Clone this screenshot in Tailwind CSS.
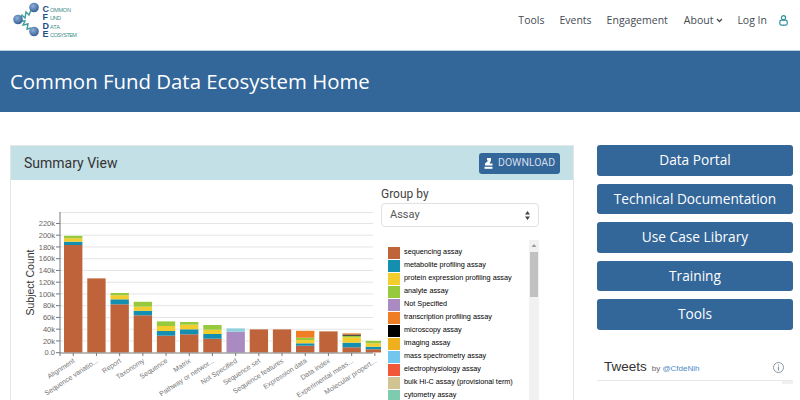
<!DOCTYPE html>
<html lang="en">
<head>
<meta charset="utf-8">
<title>Common Fund Data Ecosystem Home</title>
<script src="https://cdn.jsdelivr.net/npm/@tailwindcss/browser@4"></script>
</head>
<body class="bg-white font-['Open_Sans',sans-serif] overflow-hidden">
<div class="h-[400px] overflow-hidden">
    <!-- Navbar -->
    <nav class="h-[50px] flex items-start justify-between pl-[12px] pr-[12px]">
        <svg class="w-[70px] h-[42px]" viewBox="12 0 70 42">
            <defs>
                <radialGradient id="ball" cx="40%" cy="35%" r="70%">
                    <stop offset="0%" stop-color="#8fb0d8"/>
                    <stop offset="100%" stop-color="#2f5b93"/>
                </radialGradient>
            </defs>
            <path d="M31 10 L29 15 L26 12 L25 18 L22 15 L21 19 M21 21 L25 21 L23 25 L28 24 L27 29 L31 28" fill="none" stroke="#3f9c97" stroke-width="1.4"/>
            <circle cx="34" cy="7.5" r="4.8" fill="url(#ball)"/>
            <circle cx="18" cy="19.5" r="4.8" fill="url(#ball)"/>
            <circle cx="34" cy="31.5" r="4.8" fill="url(#ball)"/>
            <g font-family="Liberation Sans" font-weight="700" font-size="9" fill="#1f4f86">
                <text x="42.5" y="11.5">C</text>
                <text x="42.5" y="20">F</text>
                <text x="42.5" y="28.5">D</text>
                <text x="42.5" y="37">E</text>
            </g>
            <g font-family="Liberation Sans" font-size="5.6" fill="#3f8f8c">
                <text x="50" y="11.5" textLength="21">OMMON</text>
                <text x="50" y="20" textLength="11">UND</text>
                <text x="50" y="28.5" textLength="10">ATA</text>
                <text x="50" y="37" textLength="27">COSYSTEM</text>
            </g>
        </svg>
        <div class="flex items-center mt-[13px] leading-[14px] text-[10.5px] text-[#444b55]">
            <a class="mr-[15px]">Tools</a>
            <a class="mr-[15px]">Events</a>
            <a class="mr-[16px]">Engagement</a>
            <a class="mr-[14px] flex items-center">About
                <svg class="w-[7px] h-[5px] ml-[3px]" viewBox="0 0 7 5"><path d="M1 1 L3.5 3.5 L6 1" fill="none" stroke="#444b55" stroke-width="1.3"/></svg>
            </a>
            <a class="mr-[12px]">Log In</a>
            <svg class="w-[9px] h-[11px]" viewBox="0 0 9 11" fill="none" stroke="#2f8f9c" stroke-width="1.2">
                <circle cx="4.5" cy="2.8" r="2.1"/>
                <rect x="0.8" y="5.2" width="7.4" height="5" rx="1.8"/>
            </svg>
        </div>
    </nav>

    <!-- Title band -->
    <header class="h-[62px] bg-[#336699] border-t border-[#b9cfe0] flex items-center pl-[10px]">
        <h1 class="text-[20.4px] text-white font-normal leading-none">Common Fund Data Ecosystem Home</h1>
    </header>

    <!-- Content -->
    <main class="flex items-start pt-[33px] pl-[10px]">
        <section class="w-[564px] h-[300px] border border-[#e6e6e6] shrink-0">
            <div class="h-[34px] bg-[#c3e0e6] flex items-center justify-between pl-[13px] pr-[13px] font-['Roboto',sans-serif]">
                <h2 class="text-[14px] font-normal text-[#333]">Summary View</h2>
                <button class="w-[81px] h-[21px] bg-[#336699] rounded-[3px] flex items-center pl-[5px] text-[10.5px] text-[#d5dfeb]">
                    <svg class="w-[9px] h-[11px] mr-[5px]" viewBox="0 0 9 11" fill="#fff">
                        <path d="M3 0 H7 V2.5 L5.5 5.5 H8.5 V7.5 H1 V5.5 L4.5 2.5 H3 Z"/>
                        <rect x="0.5" y="8.8" width="8" height="2"/>
                    </svg>
                    DOWNLOAD
                </button>
            </div>
            <div class="flex">
                <svg id="chart" class="w-[370px] h-[220px] shrink-0" viewBox="11 180 370 220" font-family="Liberation Sans"></svg>
                <div class="w-[158px] shrink-0 font-['Roboto',sans-serif]">
                    <label class="block text-[12px] leading-[14px] text-[#444] mt-[7px]">Group by</label>
                    <div class="mt-[2px] h-[24px] border border-[#dee2e6] rounded-[4px] flex items-center justify-between pl-[8px] pr-[8px] text-[11px] text-[#555]">
                        <span>Assay</span>
                        <svg class="w-[5px] h-[9px]" viewBox="0 0 5 9" fill="#444"><path d="M2.5 0 L5 3.5 H0 Z M2.5 9 L5 5.5 H0 Z"/></svg>
                    </div>
                    <!-- Legend -->
                    <div class="mt-[13px] ml-[6px] h-[160px] flex font-['Liberation_Sans',sans-serif]">
                        <ul class="w-[142px] pl-[1px] pt-[6px] text-[7.25px] text-black">
                            <li class="flex items-center h-[13px]"><span class="w-[12px] h-[12px] bg-[#bf633a] mr-[4px]"></span>sequencing assay</li>
                            <li class="flex items-center h-[13px]"><span class="w-[12px] h-[12px] bg-[#148fb0] mr-[4px]"></span>metabolite profiling assay</li>
                            <li class="flex items-center h-[13px]"><span class="w-[12px] h-[12px] bg-[#f3cd2d] mr-[4px]"></span>protein expression profiling assay</li>
                            <li class="flex items-center h-[13px]"><span class="w-[12px] h-[12px] bg-[#97c93d] mr-[4px]"></span>analyte assay</li>
                            <li class="flex items-center h-[13px]"><span class="w-[12px] h-[12px] bg-[#a98bc2] mr-[4px]"></span>Not Specified</li>
                            <li class="flex items-center h-[13px]"><span class="w-[12px] h-[12px] bg-[#ef7d23] mr-[4px]"></span>transcription profiling assay</li>
                            <li class="flex items-center h-[13px]"><span class="w-[12px] h-[12px] bg-black mr-[4px]"></span>microscopy assay</li>
                            <li class="flex items-center h-[13px]"><span class="w-[12px] h-[12px] bg-[#f0af1c] mr-[4px]"></span>imaging assay</li>
                            <li class="flex items-center h-[13px]"><span class="w-[12px] h-[12px] bg-[#73c6ee] mr-[4px]"></span>mass spectrometry assay</li>
                            <li class="flex items-center h-[13px]"><span class="w-[12px] h-[12px] bg-[#f1583a] mr-[4px]"></span>electrophysiology assay</li>
                            <li class="flex items-center h-[13px]"><span class="w-[12px] h-[12px] bg-[#cfc492] mr-[4px]"></span>bulk Hi-C assay (provisional term)</li>
                            <li class="flex items-center h-[13px]"><span class="w-[12px] h-[12px] bg-[#7fcbaf] mr-[4px]"></span>cytometry assay</li>
                        </ul>
                        <div class="w-[10px] bg-[#f1f1f1] flex flex-col items-center">
                            <svg class="w-[10px] h-[12px]" viewBox="0 0 10 12" fill="#9a9a9a"><path d="M5 4 L7.5 7 H2.5 Z"/></svg>
                            <div class="w-[8px] h-[45px] bg-[#c1c1c1]"></div>
                        </div>
                    </div>
                </div>
            </div>
        </section>

        <!-- Sidebar -->
        <aside class="w-[196px] ml-[23px] shrink-0">
            <div class="flex flex-col gap-[8px] text-[13.7px] font-medium text-white">
                <a class="h-[31px] bg-[#336699] rounded-[3px] flex items-center justify-center">Data Portal</a>
                <a class="h-[30px] bg-[#336699] rounded-[3px] flex items-center justify-center">Technical Documentation</a>
                <a class="h-[31px] bg-[#336699] rounded-[3px] flex items-center justify-center">Use Case Library</a>
                <a class="h-[30px] bg-[#336699] rounded-[3px] flex items-center justify-center">Training</a>
                <a class="h-[31px] bg-[#336699] rounded-[3px] flex items-center justify-center">Tools</a>
            </div>
            <div class="mt-[25px] h-[26px] border-b border-[#e8e8e8] flex items-center justify-between pl-[7px] pr-[9px] font-['Liberation_Sans',sans-serif]">
                <div class="flex items-baseline">
                    <span class="text-[13.5px] text-[#333]">Tweets</span>
                    <span class="text-[8px] text-[#666] ml-[5px]">by <span class="text-[#4a8ac4]">@CfdeNih</span></span>
                </div>
                <svg class="w-[11px] h-[11px]" viewBox="0 0 11 11" fill="none" stroke="#8a97a3">
                    <circle cx="5.5" cy="5.5" r="5"/>
                    <path d="M5.5 4.5 V8.5 M5.5 2.5 V3.5" stroke-width="1.2"/>
                </svg>
            </div>
            <div class="ml-auto w-[11px] h-[3px] bg-[#f1f1f1]"></div>
        </aside>
    </main>
</div>

<script>
    // Summary chart, coordinates are page pixels
    var colors = { b: '#bf633a', t: '#148fb0', y: '#f3cd2d', g: '#97c93d', p: '#a98bc2', o: '#ef7d23', k: '#111111', l: '#8fd0dd' };
    var bars = [
        ['Alignment', [['b', 245], ['t', 241.7], ['y', 238.3], ['g', 235.7]]],
        ['Sequence variatio...', [['b', 278.3]]],
        ['Report', [['b', 304.3], ['t', 299.3], ['y', 295.3], ['g', 293]]],
        ['Taxonomy', [['b', 315.3], ['t', 310.7], ['y', 306.7], ['g', 301.7]]],
        ['Sequence', [['b', 335.7], ['t', 331], ['y', 326], ['g', 321.3]]],
        ['Matrix', [['b', 334.3], ['t', 329.3], ['y', 324.7], ['g', 322]]],
        ['Pathway or networ...', [['b', 338.7], ['t', 334], ['y', 329.7], ['g', 325]]],
        ['Not Specified', [['p', 331.7], ['l', 328.3]]],
        ['Sequence set', [['b', 329.3]]],
        ['Sequence features', [['b', 329.3]]],
        ['Expression data', [['b', 345.7], ['t', 343.3], ['y', 340], ['g', 337.7], ['o', 330.7]]],
        ['Data index', [['b', 331.3]]],
        ['Experimental meas...', [['b', 347.3], ['t', 342.7], ['y', 337.3], ['g', 335.7], ['k', 334.5], ['o', 333.3]]],
        ['Molecular propert...', [['b', 349.3], ['t', 346.7], ['y', 343.3], ['g', 340.7]]]
    ];
    var svg = '';
    // Grid and y axis
    for (var i = 0; i <= 11; i++) {
        var y = 352.7 - i * 11.75;
        if (i > 0) svg += '<line x1="60" x2="373" y1="' + y + '" y2="' + y + '" stroke="#e4e4e4"/>';
        svg += '<line x1="56" x2="60" y1="' + y + '" y2="' + y + '" stroke="#777"/>';
        svg += '<text x="55" y="' + (y + 2.6) + '" text-anchor="end" font-size="7.5" fill="#666">' + (i === 0 ? '0.0' : (i * 20) + 'k') + '</text>';
    }
    svg += '<line x1="60" x2="373" y1="212.5" y2="212.5" stroke="#e4e4e4"/>';
    svg += '<line x1="60" x2="60" y1="212" y2="356" stroke="#777"/>';
    svg += '<text transform="translate(34 282.5) rotate(-90)" text-anchor="middle" font-size="10.5" fill="#333">Subject Count</text>';
    // Stacked bars
    bars.forEach(function (bar, n) {
        var x = 64 + n * 23.2, bottom = 352.7;
        bar[1].forEach(function (seg) {
            svg += '<rect x="' + x + '" y="' + seg[1] + '" width="18.5" height="' + (bottom - seg[1]) + '" fill="' + colors[seg[0]] + '"/>';
            bottom = seg[1];
        });
        svg += '<rect x="' + (x - 0.5) + '" y="' + (bottom - 0.5) + '" width="19.5" height="' + (353.2 - bottom) + '" fill="none" stroke="#fff" stroke-opacity="0.45"/>';
        var cx = x + 9.25;
        svg += '<line x1="' + cx + '" x2="' + cx + '" y1="353" y2="356" stroke="#777"/>';
        svg += '<text transform="translate(' + (cx + 2) + ' 362) rotate(-33)" text-anchor="end" font-size="7" fill="#777">' + bar[0] + '</text>';
    });
    svg += '<line x1="60" x2="373" y1="353" y2="353" stroke="#777"/>';
    document.getElementById('chart').innerHTML = svg;
</script>
</body>
</html>
